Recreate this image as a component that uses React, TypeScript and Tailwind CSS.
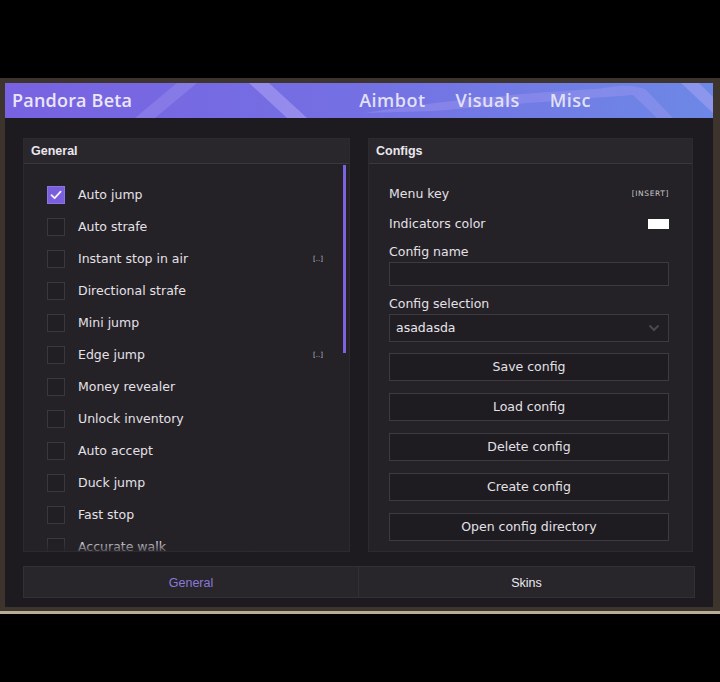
import React from 'react';

const features = [
  { label: 'Auto jump', checked: true },
  { label: 'Auto strafe' },
  { label: 'Instant stop in air', bind: true },
  { label: 'Directional strafe' },
  { label: 'Mini jump' },
  { label: 'Edge jump', bind: true },
  { label: 'Money revealer' },
  { label: 'Unlock inventory' },
  { label: 'Auto accept' },
  { label: 'Duck jump' },
  { label: 'Fast stop' },
  { label: 'Accurate walk' },
];

const buttons = ['Save config', 'Load config', 'Delete config', 'Create config', 'Open config directory'];

function Checkbox({ checked }: { checked?: boolean }) {
  if (checked) {
    return (
      <div className="w-[18px] h-[18px] bg-[#7a5fdc] border border-[#8b74e6] flex items-center justify-center">
        <svg width="14" height="14" viewBox="0 0 14 14" fill="none">
          <path d="M2.5 7.2 L5.6 10.2 L11.6 3.6" stroke="#f4f0ff" strokeWidth="1.8" strokeLinecap="round" strokeLinejoin="round" />
        </svg>
      </div>
    );
  }
  return <div className="w-[18px] h-[18px] bg-[#211f23] border border-[#3a383d]" />;
}

function Header() {
  return (
    <div className="relative h-[35px] bg-gradient-to-r from-[#7862e1] via-[#7470e3] to-[#6d88e6] flex items-center overflow-hidden">
      <svg className="absolute inset-0" width="708" height="35" viewBox="0 0 708 35" fill="none">
        <path d="M130 35 L172 0 L192 0 L150 35 Z" fill="#a79af2" fillOpacity="0.35" />
        <path d="M244 0 L264 0 L302 35 L282 35 Z" fill="#b5a9f6" fillOpacity="0.5" />
        <path d="M360 30 C 430 18, 520 10, 590 6 C 610 4, 620 0, 640 6 L 668 35 L 652 35 L 628 12 C 600 14, 520 20, 430 28 Z" fill="#a99ef4" fillOpacity="0.35" />
        <path d="M676 0 L694 0 L708 14 L708 30 Z" fill="#b2a8f5" fillOpacity="0.45" />
      </svg>
      <span className="relative pl-[7px] text-[18px] font-semibold tracking-[0.2px] text-[#ebe6fa] [font-family:'Open_Sans',sans-serif]">Pandora Beta</span>
      <div className="relative ml-auto mr-[122px] flex items-center gap-[30px] text-[18px] font-semibold tracking-[0.5px] text-[#e2e0f7] [font-family:'Open_Sans',sans-serif]">
        <span>Aimbot</span>
        <span>Visuals</span>
        <span className="relative">
          Misc
          <span className="absolute left-[-2px] right-[-2px] bottom-[-8px] h-[2px] bg-[#b4abf2]" />
        </span>
      </div>
    </div>
  );
}

function PanelTitle({ title }: { title: string }) {
  return (
    <div className="h-[25px] bg-[#29272b] border-b border-[#3a383c] flex items-center pl-[7px] text-[12.5px] font-bold text-[#eae7ee] [font-family:'Liberation_Sans',sans-serif]">
      {title}
    </div>
  );
}

function GeneralPanel() {
  return (
    <div className="w-[327px] h-[414px] bg-[#242226] border border-[#2c2a2e] flex flex-col">
      <PanelTitle title="General" />
      <div className="relative flex-1 overflow-hidden">
        <div className="flex flex-col gap-[14px] pt-[22px] pl-[23px] pr-[26px]">
          {features.map((f) => (
            <div key={f.label} className="flex items-center h-[18px]">
              <Checkbox checked={f.checked} />
              <span className="ml-[13px] text-[12.5px] text-[#e4e1e8]">{f.label}</span>
              {f.bind && <span className="ml-auto text-[7px] text-[#bdbac2]">[..]</span>}
            </div>
          ))}
        </div>
        <div className="absolute right-[3px] top-[1px] w-[3px] h-[188px] bg-[#7b63e0]" />
        <div className="absolute left-0 right-0 bottom-0 h-[10px] bg-gradient-to-b from-transparent to-[#242226]/70" />
      </div>
    </div>
  );
}

function ConfigsPanel() {
  return (
    <div className="w-[325px] h-[414px] bg-[#242226] border border-[#2c2a2e] flex flex-col">
      <PanelTitle title="Configs" />
      <div className="flex flex-col pl-[20px] pr-[23px] pt-[22px] text-[12.5px] text-[#e4e1e8]">
        <div className="flex items-center justify-between h-[16px]">
          <span>Menu key</span>
          <span className="text-[7.5px] tracking-[0.6px] text-[#c9c6ce]">[INSERT]</span>
        </div>
        <div className="flex items-center justify-between h-[16px] mt-[14px]">
          <span>Indicators color</span>
          <div className="w-[21px] h-[10px] bg-white" />
        </div>
        <span className="mt-[12px] leading-[16px]">Config name</span>
        <div className="mt-[2px] h-[24px] bg-[#201e22] border border-[#3c3a3e]" />
        <span className="mt-[10px] leading-[16px]">Config selection</span>
        <div className="mt-[2px] h-[28px] bg-[#201e22] border border-[#3c3a3e] flex items-center pl-[6px] pr-[8px]">
          <span className="text-[#e8e5ec]">asadasda</span>
          <svg className="ml-auto" width="12" height="8" viewBox="0 0 12 8" fill="none">
            <path d="M1.5 1.5 L6 6 L10.5 1.5" stroke="#4a484d" strokeWidth="2" />
          </svg>
        </div>
        <div className="mt-[11px] flex flex-col gap-[12px]">
          {buttons.map((b) => (
            <div key={b} className="h-[28px] bg-[#1e1c20] border border-[#3d3b40] flex items-center justify-center text-[#e4e1e8]">
              {b}
            </div>
          ))}
        </div>
      </div>
    </div>
  );
}

export default function App() {
  return (
    <div className="w-[720px] h-[682px] bg-black flex flex-col [font-family:'DejaVu_Sans',sans-serif]">
      <div className="h-[78px]" />
      <div className="h-[536px] bg-[#3d352d] pt-[5px] pl-[5px] pr-[7px] pb-[4px] border-b-[3px] border-[#b9ad98]">
        <div className="h-full bg-[#1d1b1f] flex flex-col">
          <Header />
          <div className="flex gap-[18px] pl-[18px] pt-[20px]">
            <GeneralPanel />
            <ConfigsPanel />
          </div>
          <div className="mx-[18px] mt-[14px] h-[32px] bg-[#28262a] border border-[#323034] flex text-[12.5px] [font-family:'Liberation_Sans',sans-serif]">
            <div className="w-[335px] border-r border-[#323034] flex items-center justify-center pt-[2px] text-[#8c78da]">General</div>
            <div className="flex-1 flex items-center justify-center pt-[2px] text-[#eceaf0]">Skins</div>
          </div>
        </div>
      </div>
    </div>
  );
}
